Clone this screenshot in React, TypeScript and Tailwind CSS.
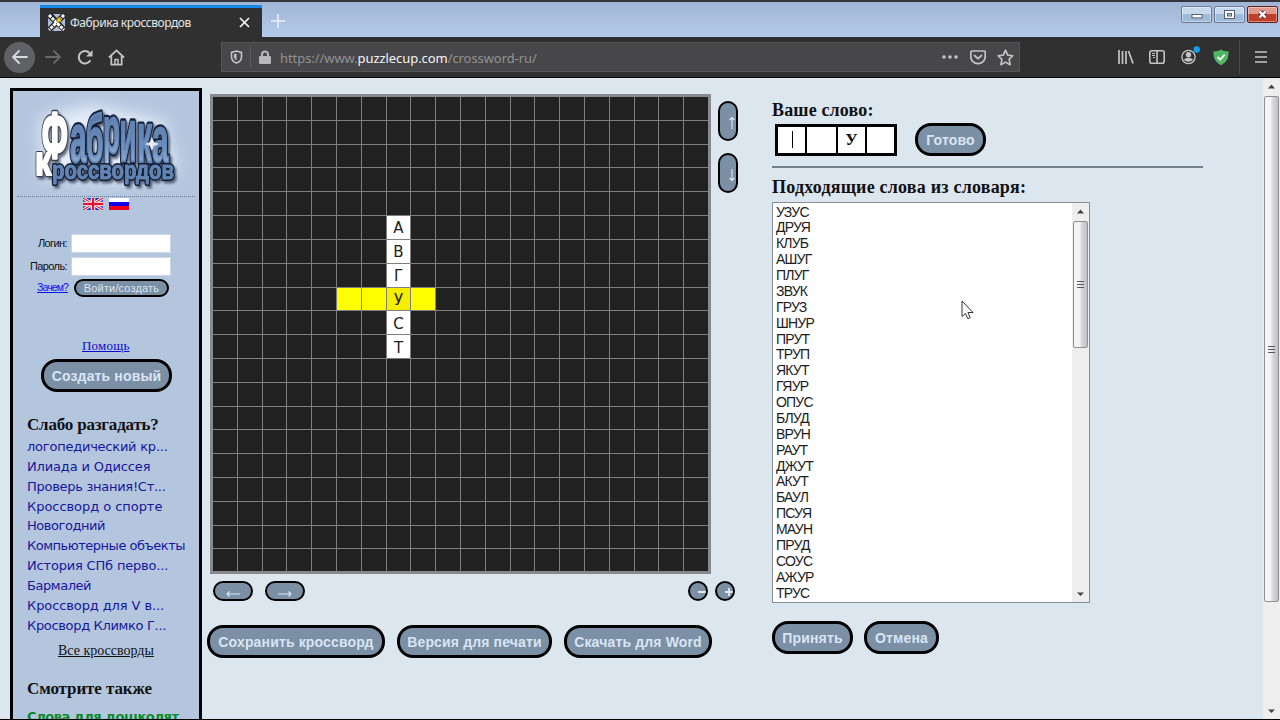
import { clsx } from "clsx";

const crosswords = [
  { title: "логопедический кр...", spacing: "tracking-[-0.230px]" },
  { title: "Илиада и Одиссея", spacing: "tracking-[-0.160px]" },
  { title: "Проверь знания!Ст...", spacing: "tracking-[-0.280px]" },
  { title: "Кроссворд о спорте", spacing: "tracking-[-0.050px]" },
  { title: "Новогодний", spacing: "tracking-[-0.450px]" },
  { title: "Компьютерные объекты", spacing: "tracking-[-0.480px]" },
  { title: "История СПб перво...", spacing: "tracking-[-0.180px]" },
  { title: "Бармалей", spacing: "tracking-[-0.450px]" },
  { title: "Кроссворд для V в...", spacing: "tracking-[-0.100px]" },
  { title: "Кросворд Климко Г...", spacing: "tracking-[-0.330px]" },
];

const words = [
  "УЗУС", "ДРУЯ", "КЛУБ", "АШУГ", "ПЛУГ", "ЗВУК", "ГРУЗ", "ШНУР", "ПРУТ",
  "ТРУП", "ЯКУТ", "ГЯУР", "ОПУС", "БЛУД", "ВРУН", "РАУТ", "ДЖУТ", "АКУТ",
  "БАУЛ", "ПСУЯ", "МАУН", "ПРУД", "СОУС", "АЖУР", "ТРУС",
];

const SIZE = 20;
const placed = "АВГУСТ";
const placedCol = 7;
const placedRow = 5;
const activeRow = 8;

function PillButton({ label, className }: { label: string; className: string }) {
  return (
    <button
      className={clsx(
        "flex h-[33px] items-center justify-center rounded-[16px] border-[3px] border-black bg-[#7b8fa5] pt-px font-['Liberation_Sans',sans-serif] text-[14px] font-bold tracking-[0.150px] whitespace-nowrap text-[#d9e5f3]",
        className,
      )}
    >
      {label}
    </button>
  );
}

function TabStrip() {
  return (
    <div className="flex h-[37px] shrink-0 border-t-2 border-[#34343c] bg-linear-to-b from-[#9fb5d3] to-[#b5cbea]">
      <div className="ml-[40px] mt-[3px] flex h-[32px] w-[222px] items-center border-t-[3px] border-[#1688e8] bg-[#303031] pl-2">
        <svg className="size-[17px]" viewBox="0 0 17 17">
          <rect width="17" height="17" fill="#aebdd6" />
          <path d="M0 0h5l12 13v4h-3L0 4z M17 0v4L4 17H0v-4L13 0z" fill="#222" />
          <path d="M1 1l15 15M16 1L1 16" stroke="#fff" strokeWidth="3" strokeDasharray="3 1" />
          <circle cx="11" cy="6" r="2.4" fill="#f0c82c" stroke="#5e4a00" strokeWidth=".7" />
        </svg>
        <span className="ml-[5px] font-['Noto_Sans',sans-serif] text-[12px] tracking-[-0.430px] text-[#e6e6e6]">
          Фабрика кроссвордов
        </span>
        <svg className="mr-[12px] ml-auto size-[11px]" viewBox="0 0 11 11">
          <path d="M1 1l9 9M10 1l-9 9" stroke="#f4f4f4" strokeWidth="1.7" />
        </svg>
      </div>
      <svg className="mt-[12px] ml-[9px] size-[14px]" viewBox="0 0 14 14">
        <path d="M7 0v14M0 7h14" stroke="#e9f0fa" strokeWidth="1.6" />
      </svg>
      <div className="mt-[4px] mr-[2px] ml-auto flex h-[17px] gap-[2px]">
        <WindowButton className="border-[#6a7c97] bg-linear-to-b from-[#c6d8ec] from-50% to-[#9ebbd8] to-50%">
          <rect x="10" y="7.5" width="10" height="3.4" fill="#fff" stroke="#576072" />
        </WindowButton>
        <WindowButton className="border-[#6a7c97] bg-linear-to-b from-[#c6d8ec] from-50% to-[#9ebbd8] to-50%">
          <rect x="9.5" y="3.5" width="10" height="8" fill="#fff" stroke="#576072" />
          <rect x="12.5" y="6.5" width="4" height="2.5" fill="#a9c2de" stroke="#576072" />
        </WindowButton>
        <WindowButton className="border-[#5f1d1c] bg-linear-to-b from-[#df9a8c] from-50% to-[#c03f28] to-50%">
          <path d="M11.5 4.5l6 6M17.5 4.5l-6 6" stroke="#5e3c42" strokeWidth="4.2" />
          <path d="M11.5 4.5l6 6M17.5 4.5l-6 6" stroke="#fff" strokeWidth="2.4" />
        </WindowButton>
      </div>
    </div>
  );
}

function WindowButton({ className, children }: { className: string; children: React.ReactNode }) {
  return (
    <div className={clsx("h-[17px] w-[31px] rounded-[2px] border ring-1 ring-white/40 ring-inset", className)}>
      <svg className="h-[15px] w-[29px]" viewBox="0 0 29 15">
        {children}
      </svg>
    </div>
  );
}

function Toolbar() {
  return (
    <div className="flex h-[41px] shrink-0 items-center border-b border-black bg-[#303031] text-[#c4c4c6]">
      <div className="ml-[4px] flex size-[31px] items-center justify-center rounded-full bg-[#606067]">
        <svg className="size-4" viewBox="0 0 16 16" fill="none" stroke="#d9d9dc" strokeWidth="1.8" strokeLinecap="round">
          <path d="M15 8H1.5M7 2L1 8l6 6" />
        </svg>
      </div>
      <svg className="ml-[10px] size-4" viewBox="0 0 16 16" fill="none" stroke="#68686b" strokeWidth="1.8" strokeLinecap="round">
        <path d="M1 8h13.5M9 2l6 6-6 6" />
      </svg>
      <svg className="ml-[16px] size-4" viewBox="0 0 16 16" fill="none" stroke="currentColor" strokeWidth="2">
        <path d="M13.4 11.2A6.2 6.2 0 1 1 12.5 4" />
        <path d="M15.5 1v6.500H9z" fill="currentColor" stroke="none" />
      </svg>
      <svg className="ml-[15px] size-[17px]" viewBox="0 0 17 17" fill="none" stroke="currentColor" strokeWidth="1.8" strokeLinejoin="round">
        <path d="M1 8.5L8.5 1.3 16 8.5M3.3 7v8.700h10.400V7" />
        <path d="M7 15.500v-5h3v5" strokeWidth="1.5" />
      </svg>
      <div className="ml-[96px] flex h-[30px] w-[799px] items-center border border-[#555558] bg-[#474749]">
        <svg className="ml-[8px] h-[14px] w-[13px]" viewBox="0 0 13 14" fill="none" stroke="currentColor" strokeWidth="1.6">
          <path d="M6.5 1l5 1.4v4c0 3.300-2 5.600-5 6.700-3-1.100-5-3.400-5-6.700v-4z" />
          <path d="M6.5 3.600v6.800C4.600 9.300 3.900 8 3.900 6.200V4.300z" fill="currentColor" stroke="none" />
        </svg>
        <span className="ml-[7px] h-[22px] w-px bg-[#5b5b5e]" />
        <svg className="ml-[8px] h-[14px] w-[12px]" viewBox="0 0 12 14">
          <path d="M3 7V4.500a3 3 0 0 1 6 0V7" fill="none" stroke="#b8b8ba" strokeWidth="2" />
          <rect y="6" width="12" height="8" rx="1" fill="#b8b8ba" />
        </svg>
        <span className="ml-[9px] pt-[3px] font-['Noto_Sans',sans-serif] text-[13px] tracking-[-0.070px] whitespace-nowrap text-[#929294]">
          https://www.<span className="text-[#f4f4f5]">puzzlecup.com</span>/crossword-ru/
        </span>
        <svg className="ml-auto h-[4px] w-4" viewBox="0 0 16 4" fill="currentColor">
          <circle cx="2" cy="2" r="1.8" />
          <circle cx="8" cy="2" r="1.8" />
          <circle cx="14" cy="2" r="1.8" />
        </svg>
        <svg className="ml-[12px] h-[15px] w-4" viewBox="0 0 16 15" fill="none" stroke="currentColor" strokeWidth="1.7" strokeLinecap="round">
          <path d="M2 1h12a1.200 1.200 0 0 1 1.200 1.200v4.500a7.200 7 0 0 1-14.400 0V2.200A1.200 1.200 0 0 1 2 1z" />
          <path d="M4.500 5.500L8 8.700l3.500-3.200" />
        </svg>
        <svg className="mr-[5px] ml-[11px] size-[17px]" viewBox="0 0 17 17" fill="none" stroke="currentColor" strokeWidth="1.6" strokeLinejoin="round">
          <path d="M8.500 1.200l2.200 4.900 5.200.6-3.800 3.600 1 5.400-4.600-2.600-4.600 2.600 1-5.400L1.100 6.700l5.200-.6z" />
        </svg>
      </div>
      <svg className="ml-[98px] h-[14px] w-4" viewBox="0 0 16 14" stroke="currentColor" strokeWidth="1.7">
        <path d="M1 0v14M4.500 1v13M8 1v13M10.500 1L15 13.500" />
      </svg>
      <svg className="ml-[15px] h-[14px] w-4" viewBox="0 0 16 14" fill="none" stroke="currentColor" strokeWidth="1.6">
        <rect x=".8" y=".8" width="14.400" height="12.400" rx="2" />
        <path d="M8 1v12" />
        <path d="M3 3.500h3M3 5.500h3M4 7.500h2" strokeWidth="1" />
      </svg>
      <svg className="-mt-[4px] ml-[16px] h-[20px] w-[20px]" viewBox="0 0 20 20">
        <circle cx="7.500" cy="12" r="6.600" fill="none" stroke="currentColor" strokeWidth="1.300" />
        <circle cx="7.500" cy="9.800" r="2.700" fill="currentColor" />
        <path d="M3 14.500c1-2 8-2 9 0-2 3-7 3-9 0z" fill="currentColor" />
        <circle cx="15.700" cy="4.500" r="3.200" fill="#10a3ea" />
      </svg>
      <svg className="ml-[12px] h-[17px] w-4" viewBox="0 0 16 17">
        <path d="M8 .5c2 1.500 4.500 1.800 7.500 1.800C16 9 13.500 13.500 8 16.300 2.500 13.500 0 9 .5 2.300 3.500 2.300 6 2 8 .5z" fill="#53b468" />
        <path d="M4.500 8l2.700 2.700 4.500-5" fill="none" stroke="#effff0" strokeWidth="1.800" />
      </svg>
      <span className="ml-[10px] h-[34px] w-px bg-[#4b4b4e]" />
      <svg className="ml-[15px] h-[12px] w-[12px]" viewBox="0 0 12 12" stroke="currentColor" strokeWidth="1.600">
        <path d="M0 1h12M0 6h12M0 11h12" />
      </svg>
    </div>
  );
}

function Logo() {
  return (
    <svg className="h-[105px] w-[178px]" viewBox="0 0 178 105">
      <defs>
        <linearGradient id="letters" x1="0" y1="0" x2="0" y2="1">
          <stop offset="0.250" stopColor="#5c7cab" />
          <stop offset="0.650" stopColor="#7091bf" />
          <stop offset="1" stopColor="#b4c9e4" />
        </linearGradient>
        <filter id="glow" x="-30%" y="-30%" width="160%" height="160%">
          <feGaussianBlur stdDeviation="8" />
        </filter>
        <filter id="shadow" x="-20%" y="-20%" width="140%" height="150%">
          <feDropShadow dx="2" dy="2.500" stdDeviation="1.300" floodColor="#26354d" floodOpacity="0.700" />
        </filter>
        <g id="first" fontFamily="'Liberation Sans', sans-serif" fontWeight="bold" fontSize="24">
          <text transform="translate(53 71) scale(1.240 2.850)">а</text>
          <text transform="translate(69 71) scale(1.180 2.750)">б</text>
          <text transform="translate(86 62) scale(1.160 2.800)">р</text>
          <text transform="translate(102.500 70) scale(1.150 3.050)">и</text>
          <text transform="translate(120 71) scale(1.250 2.950)">к</text>
          <text transform="translate(135 71) scale(1.240 2.700)">а</text>
        </g>
        <g id="second" fontFamily="'Liberation Sans', sans-serif" fontWeight="bold" fontSize="22">
          <text transform="translate(35 88) scale(1 1.150)" textLength="122" lengthAdjust="spacingAndGlyphs">
            россвордов
          </text>
        </g>
        <g id="initials" fontFamily="'Liberation Sans', sans-serif" fontWeight="bold" fontSize="24">
          <text transform="translate(25 67) scale(1.250 2.700)">Ф</text>
          <text transform="translate(18 84) scale(1.350 1.700)">к</text>
        </g>
      </defs>
      <path d="M24 27L74 14l72 16 14 52-60 10-74-6z" fill="#eef5ff" opacity=".85" filter="url(#glow)" />
      <g strokeLinejoin="round" filter="url(#shadow)">
        <use href="#first" stroke="#15233b" strokeWidth="2.400" />
        <use href="#first" fill="url(#letters)" stroke="#6486b5" strokeWidth="0.800" />
        <use href="#second" stroke="#0e1a30" strokeWidth="3.400" />
        <use href="#second" fill="#6384b3" stroke="#6384b3" strokeWidth="0.900" />
        <use href="#initials" stroke="#3a3f49" strokeWidth="2.400" />
        <use href="#initials" fill="#fff" stroke="#fff" strokeWidth="1.300" />
      </g>
      <path d="M135 46l2 5 5 2-5 2-2 5-2-5-5-2 5-2z" fill="#fff" opacity=".85" />
    </svg>
  );
}

function Sidebar() {
  return (
    <aside className="mt-[10px] ml-[10px] flex h-[631px] w-[192px] shrink-0 flex-col overflow-hidden border-x-[3px] border-t-[3px] border-black bg-[#b4c6de] *:shrink-0">
      <div className="mx-[4px] h-[106px] border-b border-dotted border-[#687b96]">
        <Logo />
      </div>
      <div className="ml-[70px] mb-px flex h-[13px] items-center gap-[6px]">
        <svg className="h-[12px] w-[20px]" viewBox="0 0 20 12">
          <rect width="20" height="12" fill="#2333b8" />
          <path d="M0 0l20 12M20 0L0 12" stroke="#fff" strokeWidth="3" />
          <path d="M0 0l20 12M20 0L0 12" stroke="#e6203b" strokeWidth="1.200" />
          <path d="M10 0v12M0 6h20" stroke="#fff" strokeWidth="4.500" />
          <path d="M10 0v12M0 6h20" stroke="#e31232" strokeWidth="2.400" />
        </svg>
        <svg className="h-[12px] w-[20px]" viewBox="0 0 20 12">
          <rect width="20" height="4" fill="#fff" />
          <rect y="4" width="20" height="4" fill="#1200e8" />
          <rect y="8" width="20" height="4" fill="#f0001c" />
        </svg>
      </div>
      <div className="mt-[23px] grid w-[158px] grid-cols-[54px_100px] items-center gap-x-[4px] gap-y-[4px] font-['Liberation_Sans',sans-serif] text-[11px] leading-[19px] tracking-[-0.600px] text-[#111]">
        <label className="text-right">Логин:</label>
        <input className="h-[19px] border border-[#cdd6e2] bg-white" />
        <label className="text-right">Пароль:</label>
        <input className="h-[19px] border border-[#cdd6e2] bg-white" />
      </div>
      <div className="mt-[3px] flex h-[18px] items-center">
        <a className="ml-[24px] w-[31px] font-['Liberation_Sans',sans-serif] text-[10.500px] tracking-[-0.900px] whitespace-nowrap text-[#1010f0] underline">
          Зачем?
        </a>
        <button className="ml-[6px] flex h-[18px] w-[95px] items-center justify-center rounded-full border-2 border-black bg-[#7b8fa5] font-['Liberation_Sans',sans-serif] text-[11px] tracking-[0.150px] whitespace-nowrap text-[#d9e5f3]">
          Войти/создать
        </button>
      </div>
      <a className="mt-[40px] ml-[69px] h-[18px] font-['Liberation_Serif',serif] text-[13px] leading-[18px] tracking-[0.200px] text-[#0b0bd0] underline">
        Помощь
      </a>
      <PillButton label="Создать новый" className="mt-[4px] ml-[28px] w-[131px] tracking-[0.040px]" />
      <h2 className="mt-[23px] ml-[14px] h-[20px] font-['Liberation_Serif',serif] text-[17px] leading-[20px] font-bold tracking-[-0.200px] whitespace-nowrap text-[#111]">
        Слабо разгадать?
      </h2>
      <ul className="mt-[2px] ml-[14px] font-['DejaVu_Sans',sans-serif] text-[13px] leading-[19.850px] whitespace-nowrap text-[#16169a]">
        {crosswords.map((item) => (
          <li key={item.title} className={item.spacing}>
            {item.title}
          </li>
        ))}
      </ul>
      <a className="mt-[6px] ml-[45px] h-[20px] font-['Liberation_Serif',serif] text-[14px] leading-[20px] whitespace-nowrap text-[#111] underline">
        Все кроссворды
      </a>
      <h2 className="mt-[18px] ml-[14px] h-[20px] font-['Liberation_Serif',serif] text-[17px] leading-[20px] font-bold tracking-[-0.100px] whitespace-nowrap text-[#111]">
        Смотрите также
      </h2>
      <p className="mt-[8px] ml-[14px] font-['DejaVu_Sans',sans-serif] text-[13px] leading-[20px] font-bold tracking-[-0.400px] whitespace-nowrap text-[#0b8a2b]">
        Слова для дошколят
      </p>
    </aside>
  );
}

function Board() {
  const cells = [];
  for (let row = 0; row < SIZE; row++) {
    for (let col = 0; col < SIZE; col++) {
      const letter = col === placedCol ? placed[row - placedRow] : undefined;
      const active = row === activeRow && col >= 5 && col <= 8;
      cells.push(
        <div
          key={`${row}-${col}`}
          className={clsx(
            "flex items-center justify-center border-r border-b border-[#7f7f7f] pt-[3px] font-['DejaVu_Sans',sans-serif] text-[15px] leading-none text-[#222]",
            active && letter && "bg-[#f5ee00]",
            active && !letter && "bg-[#ffff00]",
            !active && letter && "bg-white",
          )}
        >
          {letter}
        </div>,
      );
    }
  }
  return (
    <div className="ml-[3px] h-[480px] w-[501px] shrink-0 overflow-hidden border-[3px] border-[#88888e] bg-[#212121]">
      <div className="grid grid-cols-[repeat(20,24.800px)] grid-rows-[repeat(20,23.820px)]">{cells}</div>
    </div>
  );
}

function ArrowButton({ d, vertical }: { d: string; vertical?: boolean }) {
  return (
    <button
      className={clsx(
        "flex items-center justify-center rounded-full border-2 border-black bg-[#7b8fa5]",
        vertical ? "h-[40px] w-[20px] pt-[4px] pl-[7px]" : "h-[20px] w-[40px] pt-[5px]",
      )}
    >
      <svg className="size-[14px] shrink-0" viewBox="0 0 14 14" fill="none" stroke="#e0eaf5" strokeWidth="1.100">
        <path d={d} />
      </svg>
    </button>
  );
}

function ZoomButton({ d }: { d: string }) {
  return (
    <button className="flex size-[20px] items-center justify-end overflow-hidden rounded-full border-2 border-black bg-[#7b8fa5]">
      <svg className="mt-[2px] size-[8px]" viewBox="0 0 8 8" stroke="#e0eaf5" strokeWidth="1.800">
        <path d={d} />
      </svg>
    </button>
  );
}

function Editor() {
  return (
    <div className="mt-[16px] ml-[5px] w-[531px] shrink-0">
      <div className="flex">
        <Board />
        <div className="mt-[7px] ml-[7px] flex flex-col gap-[12px]">
          <ArrowButton vertical d="M7 13V1.500M4.500 4L7 1.500 9.500 4" />
          <ArrowButton vertical d="M7 1v11.500M4.500 10L7 12.500 9.500 10" />
        </div>
      </div>
      <div className="mt-[7px] ml-[6px] flex h-[20px]">
        <ArrowButton d="M14 7H1M3.500 4.500L1 7l2.500 2.500" />
        <div className="w-[12px]" />
        <ArrowButton d="M0 7h13M10.500 4.500L13 7l-2.500 2.500" />
        <div className="ml-auto flex gap-[7px] pr-[3px]">
          <ZoomButton d="M0 4h8" />
          <ZoomButton d="M0 4h8M4 0v8" />
        </div>
      </div>
      <div className="mt-[24px] flex gap-[12px]">
        <PillButton label="Сохранить кроссворд" className="w-[178px]" />
        <PillButton label="Версия для печати" className="w-[155px]" />
        <PillButton label="Скачать для Word" className="w-[148px]" />
      </div>
    </div>
  );
}

function ScrollArrow({ up }: { up?: boolean }) {
  return (
    <svg className="h-[17px] w-full shrink-0" viewBox="0 0 16 17">
      <path d={up ? "M4.500 10.500h7L8 6.500z" : "M4.500 7.500h7L8 11z"} fill="#444" />
    </svg>
  );
}

function ScrollThumb({ className }: { className: string }) {
  return (
    <div
      className={clsx(
        "mx-px flex items-center justify-center rounded-[2px] border border-[#8e9096] bg-linear-to-r from-[#f5f5f5] from-40% via-[#d8d9dc] via-60% to-[#bfc0c6]",
        className,
      )}
    >
      <svg className="h-[9px] w-[8px]" viewBox="0 0 8 9" stroke="#55585e">
        <path d="M0 1.500h7M0 4.500h7M0 7.500h7" />
      </svg>
    </div>
  );
}

function WordPanel() {
  return (
    <div className="mt-[21px] ml-[34px] w-[431px] shrink-0 font-['Liberation_Serif',serif] text-[#111]">
      <h2 className="h-[22px] text-[18px] leading-[22px] font-bold tracking-[0.150px]">Ваше слово:</h2>
      <div className="mt-[2px] flex items-center">
        <div className="ml-[3px] grid h-[32px] w-[122px] grid-cols-[27px_29px_27px_27px] gap-x-[2px] border-[3px] border-black bg-black text-[17px] font-bold">
          <div className="flex items-center justify-center bg-white pl-[2px]">
            <span className="h-[17px] w-px bg-black" />
          </div>
          <div className="bg-white" />
          <div className="flex items-center justify-center bg-white leading-none">У</div>
          <div className="bg-white" />
        </div>
        <PillButton label="Готово" className="ml-[18px] w-[71px]" />
      </div>
      <div className="mt-[10px] h-[2px] bg-[#727f8c]" />
      <h2 className="mt-[8px] h-[22px] text-[18px] leading-[22px] font-bold tracking-[0.210px] whitespace-nowrap">
        Подходящие слова из словаря:
      </h2>
      <div className="mt-[4px] flex h-[401px] w-[318px] border border-[#868e98] bg-white">
        <ul className="grow pt-[1.500px] pl-[3px] font-['Liberation_Sans',sans-serif] text-[14px] leading-[15.870px] tracking-[-0.800px] text-[#1c1c1c]">
          {words.map((word) => (
            <li key={word}>{word}</li>
          ))}
        </ul>
        <div className="flex w-[17px] flex-col bg-[#eeeeef]">
          <ScrollArrow up />
          <ScrollThumb className="mt-px h-[127px]" />
          <div className="grow" />
          <ScrollArrow />
        </div>
      </div>
      <div className="mt-[18px] flex gap-[11px]">
        <PillButton label="Принять" className="w-[81px] tracking-[-0.100px]" />
        <PillButton label="Отмена" className="w-[75px]" />
      </div>
    </div>
  );
}

export default function App() {
  return (
    <div className="relative flex h-[720px] w-[1280px] flex-col overflow-hidden border-b border-black bg-[#dce6ef]">
      <TabStrip />
      <Toolbar />
      <main className="flex grow overflow-hidden">
        <Sidebar />
        <Editor />
        <WordPanel />
        <div className="ml-auto flex w-[17px] flex-col bg-[#eeeeef]">
          <ScrollArrow up />
          <ScrollThumb className="mt-px h-[506px]" />
          <div className="grow" />
          <ScrollArrow />
        </div>
      </main>
      <svg className="absolute top-[300px] left-[961px] h-[20px] w-[13px]" viewBox="0 0 13 20">
        <path d="M1 1v15.500l3.500-3 2.300 5.200 2.400-1-2.300-5.200H12z" fill="#fff" stroke="#333" />
      </svg>
    </div>
  );
}
